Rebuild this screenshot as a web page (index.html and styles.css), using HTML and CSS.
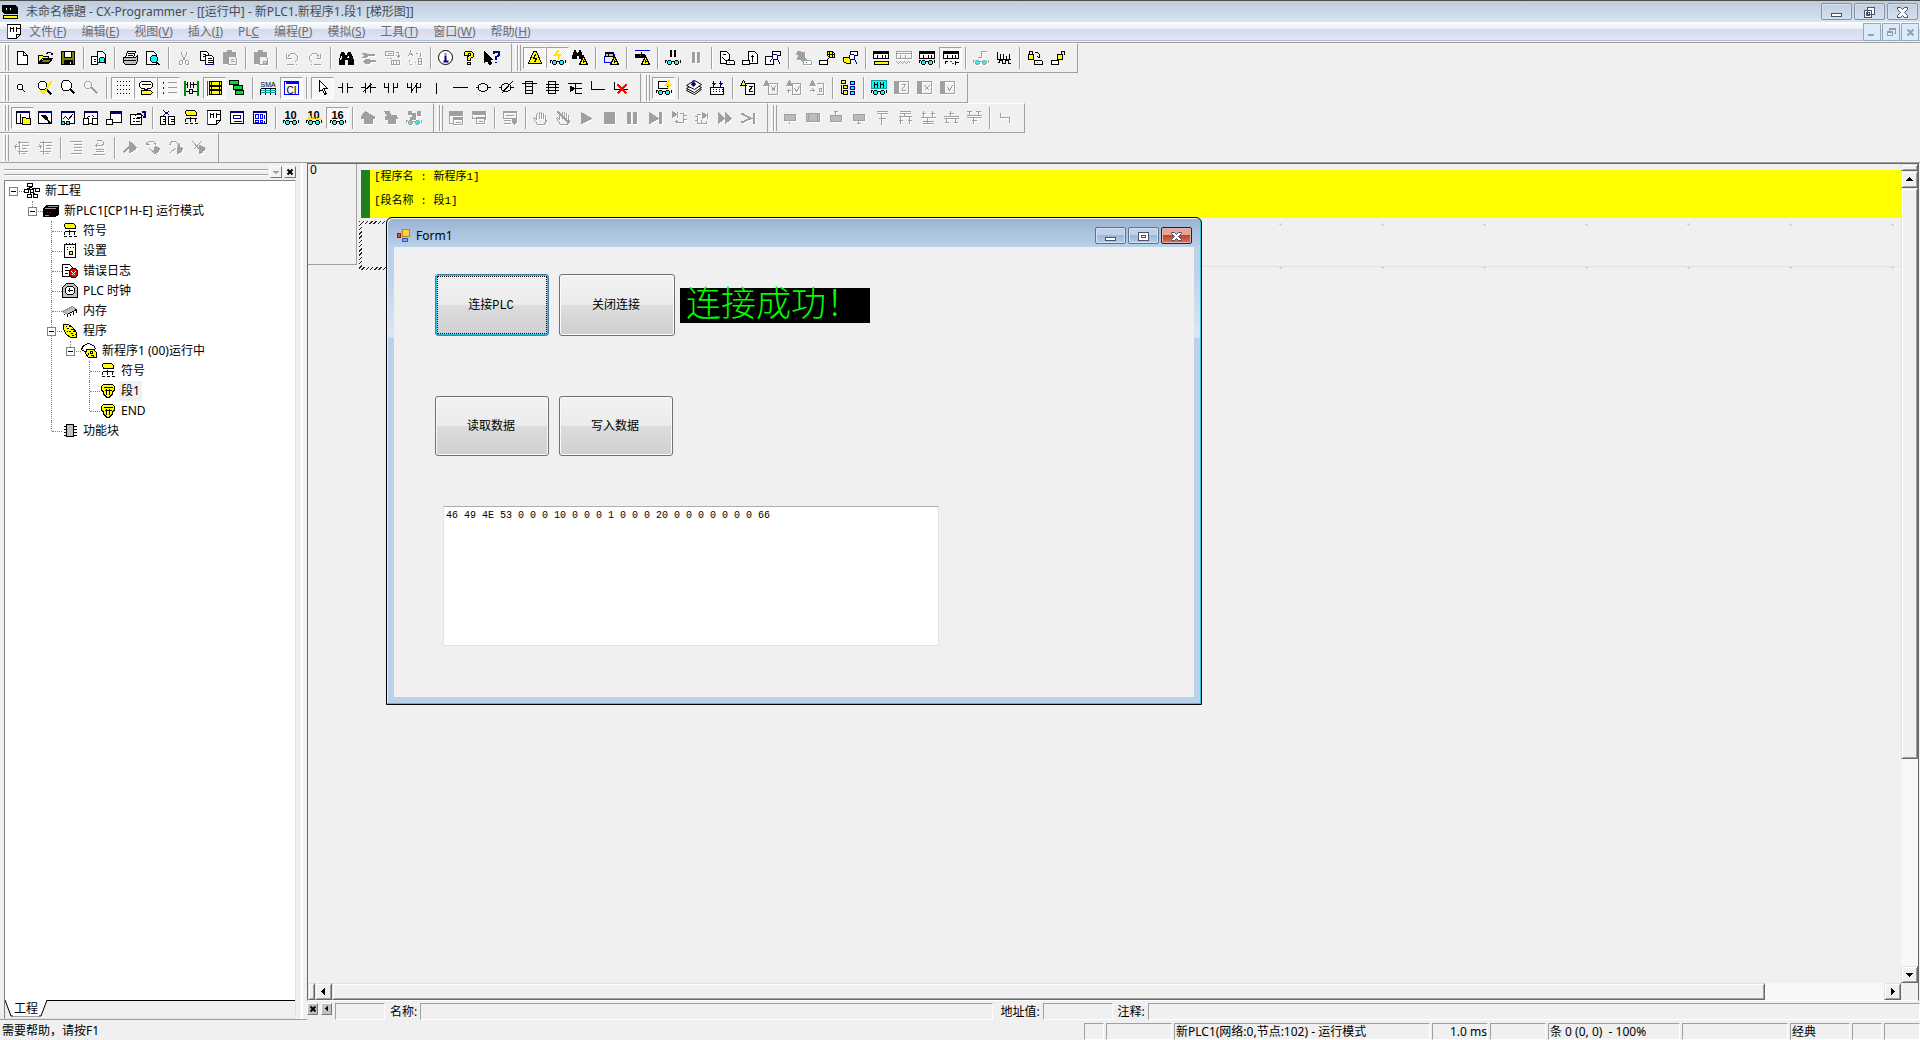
FILE: index.html
```html
<!DOCTYPE html>
<html lang="zh-CN">
<head>
  <meta charset="UTF-8" />
  <meta name="viewport" content="width=device-width, initial-scale=1.0"/>
  <title>CX-Programmer</title>
  <link rel="stylesheet" href="styles.css">
</head>
<body>

  <!-- Shared icon parts -->
  <svg class="defs" aria-hidden="true">
    <defs>
      <g id="glasses"><path d="M0 12v-2h1M15 12v-2h-1M6 11h3"/><path class="c" d="M3 10h2l1 1v2l-1 1h-2l-1-1v-2zM10 10h2l1 1v2l-1 1h-2l-1-1v-2z"/></g>
      <g id="warn"><path class="y" d="M11 6l4 8h-8z"/><path d="M11 9v3M10 11h2"/></g>
      <g id="chip"><path class="w" d="M7 10h7l1 1v3h-8z"/><path class="green" d="M9 12h1"/></g>
      <g id="plc"><path class="w" d="M0 2h15v6h-15z"/><path class="k" d="M0 1h15v2h-15z"/><path d="M4 4v4M9 4v4M12 4v4"/></g>
      <g id="lens"><path class="c" d="M7 5h3l2 2v3l-2 2h-3l-2-2v-3z"/><path d="M11 11l4 4M11 12l3 3"/></g>
      <g id="page"><path class="w" d="M3 1h6l4 4v9h-10z"/><path d="M9 1v4h4"/></g>
      <g id="contact"><path d="M0 7h5M5 2v10M10 2v10M10 7h5"/></g>
      <g id="list"><path d="M6 2h9M6 7h9M6 12h9"/></g>
      <g id="tag"><path class="y" d="M3 0h8l2 2v3h-9l-2-2v-2z"/><path d="M2 5h9M2 8h11M2 8v3M7 6v5M12 8v3M1 13h3M6 13h3M11 13h3"/></g>
      <g id="win"><path class="w" d="M1 1h13v12h-13z"/><path class="n" d="M1 1h13M1 2h13"/></g>
      <g id="section"><path class="y" d="M3 1h9l2 2v4l-2 1v3l-2 1-1 2h-3l-1-2-2-1v-3l-2-1v-4z"/><path d="M3 4h9M6 5v6M9 5v6M4 7h7"/></g>
      <g id="leaf"><path class="y" d="M1 1h5l4 3 4 5v5h-6l-4-3-3-5z"/><path d="M3 3h1M6 3h2M4 5h2M8 6h2M6 8h2M10 8h2M8 10h2M12 11h1M9 12h2M4 8h1"/></g>
      <g id="hand"><path d="M3 9v-5l1-1M6 8v-7M8 8v-7M10 8v-6M12 10v-6M3 9l-2-2-1 1 4 6h7l2-4"/></g>
    </defs>
  </svg>

  <header class="titlebar">
    <svg class="ico" viewBox="-.5 -.5 16 16"><path class="k" d="M0 1h13l2 2v6h-13l-2-2z"/><path class="w" d="M3 3h2v3h-2zM7 3h2v3h-2zM11 3h1v3h-1z"/><path class="y" d="M1 11h14v3h-14z"/></svg>
    <h1>未命名標題 - CX-Programmer - [[运行中] - 新PLC1.新程序1.段1 [梯形图]]</h1>
    <div class="caption-buttons">
      <button title="最小化"><svg class="ico" viewBox="-.5 -.5 16 16"><path class="w" d="M3 9h10v3h-10z"/></svg></button>
      <button title="还原"><svg class="ico" viewBox="-.5 -.5 16 16"><path class="w" d="M6 3h7v7h-7zM3 6h7v7h-7z"/><path d="M5 8h3v3h-3z"/></svg></button>
      <button title="关闭"><svg class="ico smooth" viewBox="-.5 -.5 16 16"><path class="w" d="M3 3h3l2 2 2-2h3v2l-3 3 3 3v2h-3l-2-2-2 2h-3v-2l3-3-3-3z"/></svg></button>
    </div>
  </header>

  <nav class="menubar">
    <svg class="ico" viewBox="-.5 -.5 16 16"><path class="w" d="M1 0h13v10l-4 4h-9z"/><path class="green" d="M1 0v14"/><path d="M4 2v5M4 4h3M7 2v5M10 2v5M10 4h3M10 14v-4h4"/></svg>
    <button>文件(<u>F</u>)</button>
    <button>编辑(<u>E</u>)</button>
    <button>视图(<u>V</u>)</button>
    <button>插入(<u>I</u>)</button>
    <button>PL<u>C</u></button>
    <button>编程(<u>P</u>)</button>
    <button>模拟(<u>S</u>)</button>
    <button>工具(<u>T</u>)</button>
    <button>窗口(<u>W</u>)</button>
    <button>帮助(<u>H</u>)</button>
    <div class="mdi-buttons">
      <button title="最小化"><svg class="ico" viewBox="-.5 -.5 16 16"><path class="k" d="M4 10h5v1h-5z"/></svg></button>
      <button title="还原"><svg class="ico" viewBox="-.5 -.5 16 16"><path d="M6 6v-2h6v5h-2M6 5h6M4 7h5v4h-5zM4 8h5"/></svg></button>
      <button title="关闭"><svg class="ico smooth" viewBox="-.5 -.5 16 16"><path class="bold" d="M5 5l6 6M11 5l-6 6"/></svg></button>
    </div>
  </nav>

  <div class="toolbar-row">
    <div class="toolbar">
      <button class="tb" title="新建"><svg class="ico" viewBox="-.5 -.5 16 16"><use href="#page"/></svg></button>
      <button class="tb" title="打开"><svg class="ico" viewBox="-.5 -.5 16 16"><path class="y" d="M1 13v-8h4l1 1h5v3M1 13h10l4-5h-10z"/><path class="olive" d="M2 12h9l3-3h-8z"/><path d="M9 3l2-1h2l2 2M15 2v2h-2"/></svg></button>
      <button class="tb" title="保存"><svg class="ico" viewBox="-.5 -.5 16 16"><path class="olive" d="M1 1h13v13h-13z"/><path class="w" d="M4 1h7v6h-7z"/><path class="k" d="M4 10h8v4h-8z"/><path class="white" d="M10 11v2"/></svg></button>
      <i class="sep"></i>
      <button class="tb" title="比较"><svg class="ico" viewBox="-.5 -.5 16 16"><path class="w" d="M6 1h5l3 3v8h-8zM0 6h6v8h-6z"/><path d="M2 9h2M2 11h2"/><path class="c" d="M9 7h3l1 1v3l-1 1h-3l-1-1v-3z"/><path d="M13 12l2 2"/></svg></button>
      <i class="sep"></i>
      <button class="tb" title="打印"><svg class="ico" viewBox="-.5 -.5 16 16"><path class="w" d="M5 1h8l-2 6h-8z"/><path class="grey" d="M1 7h12l2-2v6l-2 3h-10l-2-2z"/><path d="M5 3h6M5 5h5M1 10h12"/></svg></button>
      <button class="tb" title="打印预览"><svg class="ico" viewBox="-.5 -.5 16 16"><path class="w" d="M1 1h7l3 3v10h-10z"/><use href="#lens"/></svg></button>
      <i class="sep"></i>
      <button class="tb" title="剪切" disabled><svg class="ico" viewBox="-.5 -.5 16 16"><path d="M5 1v3l4 6M10 1v3l-4 6M4 10h2v3l-1 1h-2v-3zM9 10h2l1 1v3h-2l-1-1z"/></svg></button>
      <button class="tb" title="复制"><svg class="ico" viewBox="-.5 -.5 16 16"><path class="w" d="M1 1h6l2 2v7h-8z"/><path class="w n" d="M6 5h6l2 2v7h-8z"/><path d="M3 4h3M3 6h3M8 8h4M8 10h5M8 12h5"/></svg></button>
      <button class="tb" title="粘贴" disabled><svg class="ico" viewBox="-.5 -.5 16 16"><path class="k" d="M1 2h12v11h-12zM5 0h4v2h-4z"/><path class="paper" d="M6 6h6l2 2v6h-8z"/><path d="M8 9h3M8 11h4"/></svg></button>
      <i class="sep"></i>
      <button class="tb" title="选择性粘贴" disabled><svg class="ico" viewBox="-.5 -.5 16 16"><path class="k" d="M1 2h12v11h-12zM5 0h4v2h-4z"/><path class="paper" d="M6 6h6l2 2v6h-8z"/><path d="M10 11h3v2h-3z"/></svg></button>
      <i class="sep"></i>
      <button class="tb" title="撤消" disabled><svg class="ico" viewBox="-.5 -.5 16 16"><path d="M2 3v5h5M3 7l3-4h4l3 3v3l-3 3M2 14h7M11 14h1"/></svg></button>
      <button class="tb" title="恢复" disabled><svg class="ico" viewBox="-.5 -.5 16 16"><path d="M13 3v5h-5M12 7l-3-4h-4l-3 3v3l3 3M13 14h-7M4 14h-1"/></svg></button>
      <i class="sep"></i>
      <button class="tb" title="查找"><svg class="ico" viewBox="-.5 -.5 16 16"><path class="k" d="M3 2h2l2 4h1l2-4h2l3 8v4h-5v-5h-4v5h-5v-4z"/><path class="white" d="M3 6l-1 4M10 6l-1 2"/></svg></button>
      <button class="tb" title="替换" disabled><svg class="ico" viewBox="-.5 -.5 16 16"><path class="k" d="M1 3h4l1 1h7v1h-7l-1 2h-4l2-2zM2 11l2-2h4l1 1h5v1h-5l-1 2h-4z"/></svg></button>
      <button class="tb" title="全部替换" disabled><svg class="ico" viewBox="-.5 -.5 16 16"><path d="M1 1h8v4h-8zM3 3h4M2 8h1M5 8h2M11 2h3v4M12 5l2 2 1-2M7 10h8v4h-8zM9 10v4M12 10v4"/></svg></button>
      <button class="tb" title="更改地址" disabled><svg class="ico" viewBox="-.5 -.5 16 16"><path d="M1 6l2-5 2 5M2 4h3M8 3h2M13 2v4M2 9v2M2 14h2M7 12h1M11 8v6h3v-6zM11 11h3"/></svg></button>
      <i class="sep"></i>
      <button class="tb" title="信息"><svg class="ico smooth" viewBox="-.5 -.5 16 16"><circle class="w" cx="7" cy="7" r="7"/><path class="n bold" d="M7 3v1M6 6h1v5M5 11h5"/></svg></button>
      <button class="tb" title="帮助"><svg class="ico" viewBox="-.5 -.5 16 16"><path class="y" d="M4 1h6l2 2v3l-3 2v2h-3v-4l3-1v-2h-2v2h-4v-3zM6 12h3v2h-3z"/></svg></button>
      <button class="tb" title="上下文帮助"><svg class="ico" viewBox="-.5 -.5 16 16"><path class="k" d="M0 1l8 8h-3l2 4-2 1-2-4-3 2z"/><path class="n bold" d="M9 3v-2h5v4l-3 2v2M11 11v1"/></svg></button>
    </div>
    <div class="toolbar">
      <button class="tb on" title="在线工作"><svg class="ico" viewBox="-.5 -.5 16 16"><path class="y" d="M6 1h3l5 12h-13z"/><path d="M8 4l-2 4h3l-2 4"/></svg></button>
      <button class="tb on" title="监视"><svg class="ico" viewBox="-.5 -.5 16 16"><path class="gold bold" d="M8 0l-3 4h5l-3 5"/><use href="#glasses"/></svg></button>
      <button class="tb" title="自动在线"><svg class="ico" viewBox="-.5 -.5 16 16"><path class="k" d="M2 0h1l1 3h2l1-3h1l2 6v2h-3v-3h-3v3h-4v-2z"/><use href="#warn"/></svg></button>
      <i class="sep"></i>
      <button class="tb" title="模拟在线"><svg class="ico" viewBox="-.5 -.5 16 16"><path class="grey" d="M2 2h8v4h-8z"/><path d="M2 3h8M5 2v4"/><path class="blue" d="M1 5v7h6M11 3v2"/><use href="#warn"/></svg></button>
      <i class="sep"></i>
      <button class="tb" title="网络在线"><svg class="ico" viewBox="-.5 -.5 16 16"><path class="blue" d="M0 0h15M7 1v2"/><path class="k" d="M1 4h9v3h-9z"/><path class="red" d="M5 5h1"/><use href="#warn"/></svg></button>
      <i class="sep"></i>
      <button class="tb" title="暂停监视"><svg class="ico" viewBox="-.5 -.5 16 16"><path class="k" d="M5 0h1v6h-1zM9 0h1v6h-1z"/><use href="#glasses"/></svg></button>
      <button class="tb" title="暂停" disabled><svg class="ico" viewBox="-.5 -.5 16 16"><path class="k" d="M4 2h2v10h-2zM9 2h2v10h-2z"/></svg></button>
      <i class="sep"></i>
      <button class="tb" title="下载"><svg class="ico" viewBox="-.5 -.5 16 16"><path class="w" d="M1 1h6l3 3v9h-9z"/><path d="M3 4h3M3 7l3 3h3M9 8v3"/><use href="#chip"/></svg></button>
      <button class="tb" title="上载"><svg class="ico" viewBox="-.5 -.5 16 16"><path class="w" d="M6 1h6l3 3v9h-9z"/><path d="M10 5v6M8 7l2-2 2 2"/><path class="w" d="M0 10h7v4h-7z"/></svg></button>
      <button class="tb" title="与PLC比较"><svg class="ico" viewBox="-.5 -.5 16 16"><path class="w" d="M0 6h8v8h-8zM7 1h8v4h-8z"/><path class="w n" d="M8 4h3l1 1v3l-1 1h-3l-1-1v-3z"/><path class="n" d="M12 9l3 5M6 9l-2 3"/></svg></button>
      <i class="sep"></i>
      <button class="tb" title="传送" disabled><svg class="ico" viewBox="-.5 -.5 16 16"><path class="k" d="M1 1h3l1 1h3v6l2 1v2h-4l-1-2h-4v-2h1v-3h-2z"/><use href="#chip"/></svg></button>
      <button class="tb" title="任务传送"><svg class="ico" viewBox="-.5 -.5 16 16"><path class="y" d="M8 1h5l2 2v4h-5l-2-2z"/><path d="M10 1v6M13 1v6M8 4h7M9 8l-2 2"/><path class="w" d="M0 10h8v4h-8z"/></svg></button>
      <button class="tb" title="任务比较"><svg class="ico" viewBox="-.5 -.5 16 16"><path class="y" d="M1 7h5l2 2v4h-4l-3-2z"/><path class="w" d="M8 1h7v4h-7z"/><path class="w n" d="M8 4h3l1 1v3l-1 1h-3l-1-1v-3z"/><path class="n" d="M12 9l3 5"/></svg></button>
      <i class="sep"></i>
      <button class="tb" title="编程模式"><svg class="ico" viewBox="-.5 -.5 16 16"><use href="#plc"/><path class="y" d="M1 11h14v3h-14z"/></svg></button>
      <button class="tb" title="调试模式" disabled><svg class="ico" viewBox="-.5 -.5 16 16"><path d="M0 1h15v7h-15zM0 3h15M4 4v4M9 4v4M0 11l2 2 2-2 2 2 2-2 2 2 2-2 2 2"/></svg></button>
      <button class="tb" title="监视模式"><svg class="ico" viewBox="-.5 -.5 16 16"><use href="#plc"/><use href="#glasses"/></svg></button>
      <button class="tb on" title="运行模式"><svg class="ico" viewBox="-.5 -.5 16 16"><use href="#plc"/><path d="M1 11h3M2 10v3M11 12h4M12 10v4"/><path class="green" d="M6 11h2M8 13h2"/></svg></button>
      <i class="sep"></i>
      <button class="tb" title="微分监视" disabled><svg class="ico" viewBox="-.5 -.5 16 16"><path d="M4 7h4v-6h5"/><use href="#glasses"/></svg></button>
      <button class="tb" title="时序图"><svg class="ico" viewBox="-.5 -.5 16 16"><path d="M1 1v8h13M4 3v6M7 3v6M10 5v4M13 3v6M1 12h2v-2h3v3h3v-3h3v3h2"/></svg></button>
      <i class="sep"></i>
      <button class="tb" title="设置密码"><svg class="ico" viewBox="-.5 -.5 16 16"><path class="y" d="M1 4h5v5h-5z"/><path d="M2 4v-3h3v3M7 2h3l2 2v3M10 6l2 2"/><use href="#chip"/></svg></button>
      <button class="tb" title="释放密码"><svg class="ico" viewBox="-.5 -.5 16 16"><path class="y" d="M7 4h5v5h-5z"/><path d="M11 4v-3h3v3"/><path class="w" d="M1 10h7v4h-7z"/></svg></button>
    </div>
  </div>

  <div class="toolbar-row">
    <div class="toolbar">
      <button class="tb" title="缩小"><svg class="ico" viewBox="-.5 -.5 16 16"><path class="w" d="M4 4h3l1 1v3l-1 1h-3l-1-1v-3zM8 9l3 3"/></svg></button>
      <button class="tb" title="适合"><svg class="ico" viewBox="-.5 -.5 16 16"><path class="w" d="M3 1h4l2 2v4l-2 2h-4l-2-2v-4z"/><path class="bold" d="M9 9l5 5"/><path class="gold bold" d="M3 10l3 3 8-12"/></svg></button>
      <button class="tb" title="放大"><svg class="ico" viewBox="-.5 -.5 16 16"><path class="w" d="M3 0h5l3 3v4l-3 3h-5l-2-3v-4z"/><path class="bold" d="M10 9l4 4"/></svg></button>
      <button class="tb" title="缩放" disabled><svg class="ico" viewBox="-.5 -.5 16 16"><path d="M3 1h3l2 2v3l-2 2h-3l-2-2v-3z"/><path class="bold" d="M8 7l6 6"/></svg></button>
      <i class="sep"></i>
      <button class="tb on" title="网格"><svg class="ico" viewBox="-.5 -.5 16 16"><path class="dots" d="M1 1h14M1 5h14M1 9h14M1 13h14"/></svg></button>
      <button class="tb on" title="注释"><svg class="ico" viewBox="-.5 -.5 16 16"><path class="w" d="M3 1h9l2 2v3l-2 2h-2l-4 2v-2h-3l-2-2v-3z"/><path d="M3 4h9"/><path class="y" d="M3 10h9l2 2-2 2h-9z"/></svg></button>
      <button class="tb on" title="条注释列表"><svg class="ico" viewBox="-.5 -.5 16 16"><path class="blue bold" d="M1 2h1M1 7h1M1 12h1"/><g class="dim"><use href="#list"/></g></svg></button>
      <button class="tb" title="监视数据"><svg class="ico" viewBox="-.5 -.5 16 16"><path class="green bold" d="M1 0v15M14 0v15"/><path d="M2 4h2M4 1v6M7 1v6M7 4h3M10 1v6M10 4h3M2 11h4M6 9h3v4h-3zM9 11h4"/></svg></button>
      <button class="tb on" title="显示程序"><svg class="ico" viewBox="-.5 -.5 16 16"><path class="green" d="M0 0v15"/><path class="y" d="M2 1h12v4h-12zM2 6h12v3h-12zM2 10h12v4h-12z"/><path d="M4 1v13M12 1v13"/></svg></button>
      <button class="tb" title="梯形图树"><svg class="ico" viewBox="-.5 -.5 16 16"><path class="lime" d="M0 0h9v4h-9zM4 5h9v4h-9zM6 10h8v4h-8z"/></svg></button>
      <i class="sep"></i>
      <button class="tb" title="助记符"><svg class="ico" viewBox="-.5 -.5 16 16"><text x="0" y="6" font-size="7">SMA</text><path d="M0 8h15M0 8v6M5 8v6M10 8v6M15 8v6"/><path class="teal" d="M0 10h15M0 12h15"/></svg></button>
      <button class="tb on" title="CI"><svg class="ico" viewBox="-.5 -.5 16 16"><path class="blue" d="M0 1h14v13h-14z"/><path class="blue bold" d="M1 2h12"/><text x="2" y="13" font-size="10">CI</text></svg></button>
      <i class="sep"></i>
      <button class="tb on" title="选择"><svg class="ico" viewBox="-.5 -.5 16 16"><path class="w" d="M4 0l8 8h-4l3 5-2 1-2-5-3 2z"/></svg></button>
      <button class="tb" title="常开触点"><svg class="ico" viewBox="-.5 -.5 16 16"><use href="#contact"/></svg></button>
      <button class="tb" title="常闭触点"><svg class="ico" viewBox="-.5 -.5 16 16"><use href="#contact"/><path d="M3 11l9-8"/></svg></button>
      <button class="tb" title="或常开"><svg class="ico" viewBox="-.5 -.5 16 16"><path d="M1 2v5h4M5 2v10M10 2v10M10 7h4v-5"/></svg></button>
      <button class="tb" title="或常闭"><svg class="ico" viewBox="-.5 -.5 16 16"><path d="M1 2v5h4M5 2v10M10 2v10M10 7h4v-5M4 12l7-9"/></svg></button>
      <button class="tb" title="竖线"><svg class="ico" viewBox="-.5 -.5 16 16"><path d="M7 2v11"/></svg></button>
      <button class="tb" title="横线"><svg class="ico" viewBox="-.5 -.5 16 16"><path d="M0 7h15"/></svg></button>
      <button class="tb" title="线圈"><svg class="ico" viewBox="-.5 -.5 16 16"><path d="M0 7h3M12 7h3M6 3h3l3 2v4l-3 2h-3l-3-2v-4z"/></svg></button>
      <button class="tb" title="非线圈"><svg class="ico" viewBox="-.5 -.5 16 16"><path d="M0 7h3M12 7h3M6 3h3l3 2v4l-3 2h-3l-3-2v-4zM3 13l11-12"/></svg></button>
      <button class="tb" title="指令"><svg class="ico" viewBox="-.5 -.5 16 16"><path d="M4 1h7v12h-7zM0 3h15M4 6h7M4 10h7"/></svg></button>
      <button class="tb" title="功能块"><svg class="ico" viewBox="-.5 -.5 16 16"><path d="M4 1h7v12h-7zM1 4h13M1 7h13M1 10h13"/></svg></button>
      <button class="tb" title="参数"><svg class="ico" viewBox="-.5 -.5 16 16"><path d="M0 3h14M8 3v10M8 8h6M8 13h6"/><path class="k" d="M3 6v5l4-3z"/></svg></button>
      <button class="tb" title="连线"><svg class="ico" viewBox="-.5 -.5 16 16"><path d="M1 0v9h13"/></svg></button>
      <button class="tb" title="删除连线"><svg class="ico" viewBox="-.5 -.5 16 16"><path d="M1 1v8h13"/><path class="red bold" d="M4 4l9 9M13 4l-9 9"/></svg></button>
    </div>
    <div class="toolbar">
      <button class="tb on" title="在线编辑"><svg class="ico" viewBox="-.5 -.5 16 16"><path class="w" d="M2 1h9v7h-9z"/><path class="gold bold" d="M13 0l-3 4h4l-3 4"/><use href="#glasses"/></svg></button>
      <i class="sep"></i>
      <button class="tb" title="编译"><svg class="ico smooth" viewBox="-.5 -.5 16 16"><path class="w" d="M0 10l8 4 7-5-7-4z"/><path class="w" d="M0 8l8 4 7-5-7-4z"/><path class="w" d="M0 5l8 4 7-5-7-4z"/><path class="n bold" d="M7 0v5M5 3l2 2 2-2"/></svg></button>
      <button class="tb" title="编译全部"><svg class="ico" viewBox="-.5 -.5 16 16"><path class="w" d="M1 7h13v7h-13z"/><path class="dots" d="M3 9h10M3 11h10"/><path class="n" d="M4 0v6M2 3h4M3 4h2M11 0v6M9 3h4M10 4h2"/></svg></button>
      <i class="sep"></i>
      <button class="tb" title="开始在线编辑"><svg class="ico" viewBox="-.5 -.5 16 16"><path class="w" d="M5 3h9v11h-9z"/><path d="M8 11l4-5M8 6h4M8 11h4"/><path class="y" d="M3 0l3 5h-6z"/></svg></button>
      <button class="tb" title="取消在线编辑" disabled><svg class="ico" viewBox="-.5 -.5 16 16"><path d="M5 3h9v11h-9zM8 6l4 5M12 6l-4 5"/><path class="k" d="M3 0l3 5h-6z"/></svg></button>
      <button class="tb" title="发送更改" disabled><svg class="ico" viewBox="-.5 -.5 16 16"><path d="M6 3h8v11h-8zM8 8l2 3 3-5M0 10h4M2 8v4"/><path class="k" d="M3 0l3 5h-6z"/></svg></button>
      <button class="tb" title="转到编辑" disabled><svg class="ico" viewBox="-.5 -.5 16 16"><path d="M7 3h7v11h-7M0 10h5M3 8l2 2-2 2M10 8h2v3h-2z"/><path class="k" d="M3 0l3 5h-6z"/></svg></button>
      <i class="sep"></i>
      <button class="tb" title="交叉引用"><svg class="ico" viewBox="-.5 -.5 16 16"><path class="y" d="M1 0h4v3h-4zM3 5h4v3h-4zM3 10h4v4h-4z"/><path class="c n" d="M10 1h4v3h-4zM10 6h4v3h-4zM10 11h4v3h-4z"/><path d="M1 4v9h2"/></svg></button>
      <i class="sep"></i>
      <button class="tb" title="功能块监视"><svg class="ico" viewBox="-.5 -.5 16 16"><path class="teal cf" d="M0 0h15v8h-15z"/><path d="M3 1v6M3 4h3M6 1v6M9 1v6M9 4h3M12 1v6"/><use href="#glasses"/></svg></button>
      <button class="tb" title="编辑块" disabled><svg class="ico" viewBox="-.5 -.5 16 16"><path class="k" d="M0 1h4v12h-4z"/><path d="M4 1h10v12h-10zM7 10l4-6M7 4h4M7 10h4"/></svg></button>
      <button class="tb" title="取消块" disabled><svg class="ico" viewBox="-.5 -.5 16 16"><path class="k" d="M0 1h4v12h-4z"/><path d="M4 1h10v12h-10zM7 5l5 5M12 5l-5 5"/></svg></button>
      <button class="tb" title="确认块" disabled><svg class="ico" viewBox="-.5 -.5 16 16"><path class="k" d="M0 1h4v12h-4z"/><path d="M4 1h10v12h-10zM7 7l2 3 3-5"/></svg></button>
    </div>
  </div>

  <div class="toolbar-row">
    <div class="toolbar">
      <button class="tb on" title="工作区"><svg class="ico" viewBox="-.5 -.5 16 16"><use href="#win"/><path d="M5 3v10"/><path class="y" d="M7 7h3l1 1h4v6h-8z"/></svg></button>
      <button class="tb" title="输出窗口"><svg class="ico" viewBox="-.5 -.5 16 16"><use href="#win"/><path class="k" d="M4 5h4l2 2-2 2-2-2z"/><path class="bold" d="M8 7l5 6"/></svg></button>
      <button class="tb" title="监视窗口"><svg class="ico" viewBox="-.5 -.5 16 16"><use href="#win"/><path d="M2 9l3-3 3 3 4-5"/><path class="c" d="M1 11h3v3h-3zM6 11h3v3h-3z"/></svg></button>
      <button class="tb" title="地址引用"><svg class="ico" viewBox="-.5 -.5 16 16"><use href="#win"/><path class="w" d="M0 8h5v6h-5zM9 8h5v6h-5z"/><path d="M7 5l-3 2M9 5l2 2"/></svg></button>
      <button class="tb" title="输出"><svg class="ico" viewBox="-.5 -.5 16 16"><path class="w" d="M4 1h11v11h-11z"/><path class="n bold" d="M4 2h11"/><path class="w" d="M0 9h6v5h-6z"/></svg></button>
      <button class="tb" title="属性"><svg class="ico" viewBox="-.5 -.5 16 16"><path class="w" d="M1 4h11v10h-11z"/><path d="M3 8h2M6 8h4M3 11h2M6 11h4M5 6l3-3h3l2 2-2 2h-4"/><path class="n bold" d="M12 1h3v5h-2"/></svg></button>
      <i class="sep"></i>
      <button class="tb" title="交叉表"><svg class="ico" viewBox="-.5 -.5 16 16"><path class="n" d="M3 0l6 5M9 0l-6 5"/><path class="w" d="M0 6h5v8h-5zM8 6h6v8h-6z"/><path d="M2 9h2M2 11h2M10 9h3M10 11h3"/></svg></button>
      <button class="tb" title="符号表"><svg class="ico" viewBox="-.5 -.5 16 16"><use href="#tag"/></svg></button>
      <button class="tb" title="梯形图"><svg class="ico" viewBox="-.5 -.5 16 16"><path class="w" d="M1 0h13v10l-4 4h-9z"/><path class="green" d="M1 0v14"/><path d="M4 2v5M4 4h3M7 2v5M10 2v5M10 4h3M10 14v-4h4"/></svg></button>
      <button class="tb" title="助记符视图"><svg class="ico" viewBox="-.5 -.5 16 16"><use href="#win"/><path class="n" d="M4 5h7v3h-7zM4 11h8"/></svg></button>
      <button class="tb" title="I/O表"><svg class="ico" viewBox="-.5 -.5 16 16"><use href="#win"/><path class="blue" d="M3 4h3v4h-3zM8 4h2v4h-2zM12 4v4M3 10h3v2h-3zM8 10h2v2h-2zM12 10v2"/></svg></button>
      <i class="sep"></i>
      <button class="tb" title="十进制"><svg class="ico" viewBox="-.5 -.5 16 16"><text x="1" y="8" font-size="11" font-weight="bold">10</text><use href="#glasses"/></svg></button>
      <button class="tb" title="带符号十进制"><svg class="ico" viewBox="-.5 -.5 16 16"><text x="1" y="8" font-size="11" font-weight="bold">10</text><path class="gold bold" d="M0 8h6M3 5v6M9 8h6"/><use href="#glasses"/></svg></button>
      <button class="tb on" title="十六进制"><svg class="ico" viewBox="-.5 -.5 16 16"><text x="1" y="8" font-size="11" font-weight="bold">16</text><use href="#glasses"/></svg></button>
      <i class="sep"></i>
      <button class="tb" title="强制为开" disabled><svg class="ico" viewBox="-.5 -.5 16 16"><path class="k" d="M5 1l6 4 3 1v2h-2v5h-8v-5h-3v-2z"/></svg></button>
      <button class="tb" title="强制为关" disabled><svg class="ico" viewBox="-.5 -.5 16 16"><path class="k" d="M1 1h5l1 4h6l1 3h-2v5h-7v-4h-3v-3h3z"/></svg></button>
      <button class="tb" title="取消强制" disabled><svg class="ico" viewBox="-.5 -.5 16 16"><path class="k" d="M2 1h3v3h-3zM6 3h3v3h-3zM11 1h3v4h-3zM4 7h5v2h-5z"/><use href="#glasses"/></svg></button>
    </div>
    <div class="toolbar">
      <button class="tb" title="模拟器" disabled><svg class="ico" viewBox="-.5 -.5 16 16"><path class="k" d="M1 1h13v4h-13zM5 7h9v2h-9z"/><path d="M1 2v11h3M5 9h9v5h-9zM7 12h5"/></svg></button>
      <button class="tb" title="模拟器设置" disabled><svg class="ico" viewBox="-.5 -.5 16 16"><path class="k" d="M1 1h13v3h-13zM5 7h8v1h-8z"/><path d="M1 5v3h3M5 8h8v5h-8zM7 11h4M14 4v5"/></svg></button>
      <i class="sep"></i>
      <button class="tb" title="断点列表" disabled><svg class="ico" viewBox="-.5 -.5 16 16"><path d="M1 1h13v7h-13zM1 2h13M3 5h8M1 10h7M1 13h7"/><path class="k" d="M10 8h4v4l-2 2-2-2z"/></svg></button>
      <i class="sep"></i>
      <button class="tb" title="断点" disabled><svg class="ico" viewBox="-.5 -.5 16 16"><use href="#hand"/></svg></button>
      <button class="tb" title="清除断点" disabled><svg class="ico" viewBox="-.5 -.5 16 16"><use href="#hand"/><path class="bold" d="M1 1l12 12"/></svg></button>
      <button class="tb" title="运行" disabled><svg class="ico" viewBox="-.5 -.5 16 16"><path class="k" d="M2 2v11l10-5z"/></svg></button>
      <button class="tb" title="停止" disabled><svg class="ico" viewBox="-.5 -.5 16 16"><path class="k" d="M2 2h10v11h-10z"/></svg></button>
      <button class="tb" title="暂停" disabled><svg class="ico" viewBox="-.5 -.5 16 16"><path class="k" d="M2 2h3v11h-3zM8 2h3v11h-3z"/></svg></button>
      <button class="tb" title="单步运行" disabled><svg class="ico" viewBox="-.5 -.5 16 16"><path class="k" d="M1 2v11l9-5zM11 2h2v11h-2z"/></svg></button>
      <button class="tb" title="步入" disabled><svg class="ico" viewBox="-.5 -.5 16 16"><path class="k" d="M1 1v6l4-3zM6 1v6"/><path d="M8 3h4v9h-7v-3M12 5h3M12 9h3M3 11h3"/></svg></button>
      <button class="tb" title="步出" disabled><svg class="ico" viewBox="-.5 -.5 16 16"><path class="k" d="M8 2v6l4-3zM13 2v6"/><path d="M6 4h-3v9h9v-3M0 6h3M0 10h3M7 9v3"/></svg></button>
      <button class="tb" title="连续步进" disabled><svg class="ico" viewBox="-.5 -.5 16 16"><path class="k" d="M1 2v11l6-5zM8 2v11l6-5z"/></svg></button>
      <button class="tb" title="扫描运行" disabled><svg class="ico" viewBox="-.5 -.5 16 16"><path class="bold" d="M1 3l9 5-9 4M13 2v11"/></svg></button>
    </div>
    <div class="toolbar">
      <button class="tb" title="SFC步" disabled><svg class="ico" viewBox="-.5 -.5 16 16"><path class="shade" d="M2 4h11v6h-11zM7 11v2"/></svg></button>
      <button class="tb" title="SFC初始步" disabled><svg class="ico" viewBox="-.5 -.5 16 16"><path class="shade" d="M1 3h13v8h-13zM3 3v8M12 3v8"/></svg></button>
      <button class="tb" title="SFC入口" disabled><svg class="ico" viewBox="-.5 -.5 16 16"><path class="shade" d="M2 5h11v6h-11zM5 1h4M7 1v4"/></svg></button>
      <button class="tb" title="SFC返回" disabled><svg class="ico" viewBox="-.5 -.5 16 16"><path class="shade" d="M2 4h11v6h-11zM5 13h4M7 10v3"/></svg></button>
      <button class="tb" title="转换" disabled><svg class="ico" viewBox="-.5 -.5 16 16"><path d="M2 1h11M2 3h11M7 3v11M4 8h7"/></svg></button>
      <button class="tb" title="选择分支" disabled><svg class="ico" viewBox="-.5 -.5 16 16"><path d="M2 1h11M2 3h11M7 3v3M1 6h13M3 6v7M12 6v7M1 10h4M10 10h4"/></svg></button>
      <button class="tb" title="选择合并" disabled><svg class="ico" viewBox="-.5 -.5 16 16"><path d="M3 0v7M12 0v7M1 3h4M10 3h4M0 7h15M7 7v5M2 11h11M2 13h11"/></svg></button>
      <button class="tb" title="并行分支" disabled><svg class="ico" viewBox="-.5 -.5 16 16"><path d="M7 0v6M5 3h5M0 6h15M0 8h15M3 8v4M12 8v4M1 12h4M10 12h4"/></svg></button>
      <button class="tb" title="并行合并" disabled><svg class="ico" viewBox="-.5 -.5 16 16"><path d="M0 1h5M9 1h5M3 1v4M12 1v4M0 5h15M0 7h15M7 7v6M5 10h5"/></svg></button>
      <i class="sep"></i>
      <button class="tb" title="跳转" disabled><svg class="ico" viewBox="-.5 -.5 16 16"><path d="M3 2v5h9v5"/></svg></button>
    </div>
  </div>

  <div class="toolbar-row last">
    <div class="toolbar">
      <button class="tb" title="减少缩进" disabled><svg class="ico" viewBox="-.5 -.5 16 16"><path d="M3 2h11M7 5h7M7 8h5M3 11h10M7 13h4M5 0v14M0 6h4M2 4l-2 2 2 3"/></svg></button>
      <button class="tb" title="增加缩进" disabled><svg class="ico" viewBox="-.5 -.5 16 16"><path d="M2 2h12M8 5h6M8 8h5M2 11h11M8 13h3M6 0v14M0 6h4M2 4l2 2-2 3"/></svg></button>
      <i class="sep"></i>
      <button class="tb" title="注释块" disabled><svg class="ico" viewBox="-.5 -.5 16 16"><path d="M1 1h12M5 4h8M5 7h8M5 10h8M2 13h11"/></svg></button>
      <button class="tb" title="取消注释块" disabled><svg class="ico" viewBox="-.5 -.5 16 16"><path d="M5 0h5l2 2v2l-2 1h-6M6 3l-2 2 2 2M4 9h8M4 11h8M1 14h12"/></svg></button>
      <i class="sep"></i>
      <button class="tb" title="书签" disabled><svg class="ico" viewBox="-.5 -.5 16 16"><path class="k" d="M7 1v11l5-2 2-3-3-3z"/><path class="bold" d="M1 12l7-7"/></svg></button>
      <button class="tb" title="上一书签" disabled><svg class="ico" viewBox="-.5 -.5 16 16"><path class="k" d="M9 7v6l4-2 1-3-3-2z"/><path d="M1 4l3-3h4l3 4M1 1v3h3M4 8l8 7"/></svg></button>
      <button class="tb" title="下一书签" disabled><svg class="ico" viewBox="-.5 -.5 16 16"><path class="k" d="M9 7v6l4-2 1-3-3-2z"/><path d="M1 5l2-4h4l4 4M11 2v3h-3M2 12l6-5"/></svg></button>
      <button class="tb" title="清除书签" disabled><svg class="ico" viewBox="-.5 -.5 16 16"><path class="k" d="M8 5v8l4-2 2-3-3-2z"/><path d="M1 1l10 11M10 1l-8 8M2 2l10 11"/></svg></button>
    </div>
  </div>

  <main class="workspace">
    <aside class="project">
      <div class="dock-head">
        <div class="dock-grip"></div>
        <button class="mini" title="停靠" disabled><svg class="ico" viewBox="-.5 -.5 16 16"><path class="k" d="M5 7h5l-2 2z"/></svg></button>
        <button class="mini" title="关闭"><svg class="ico smooth" viewBox="-.5 -.5 16 16"><path class="bold" d="M5 5l5 5M10 5l-5 5"/></svg></button>
      </div>
      <div class="tree-box">
        <ul class="tree">
          <li>
            <div class="node"><button class="twist" title="折叠"></button><svg class="ico" viewBox="-.5 -.5 16 16"><path class="w" d="M3 0h5v3h-5zM0 6h4v3h-4zM6 6h3v3h-3zM11 5h4v3h-4zM3 11h4v3h-4zM9 11h4v3h-4z"/><path d="M5 3v3M2 6l4-2 6 2M7 9l-2 2M8 9l3 2"/></svg><span>新工程</span></div>
            <ul>
              <li>
                <div class="node"><button class="twist" title="折叠"></button><svg class="ico" viewBox="-.5 -.5 16 16"><path class="k" d="M3 2h12v9l-3 2h-12v-8z"/><path class="lite" d="M4 3h10M1 5h11"/><path class="red" d="M3 9h1M6 9h1"/><path class="lime-line" d="M1 12h4"/></svg><span>新PLC1[CP1H-E] 运行模式</span></div>
                <ul>
                  <li><div class="node leaf"><svg class="ico" viewBox="-.5 -.5 16 16"><use href="#tag"/></svg><span>符号</span></div></li>
                  <li><div class="node leaf"><svg class="ico" viewBox="-.5 -.5 16 16"><path class="w" d="M2 1h11v13h-11z"/><path class="dots" d="M3 0h10M4 4h7M4 6h3"/><path class="y" d="M7 8h3v3h-3z"/></svg><span>设置</span></div></li>
                  <li><div class="node leaf"><svg class="ico" viewBox="-.5 -.5 16 16"><path class="w" d="M0 1h7l3 3v9h-10z"/><path d="M2 4h3M2 7h4M2 10h3"/><path class="redfill" d="M9 5h4l2 2v5l-2 2h-4l-2-2v-5z"/><path class="white" d="M9 8l4 4M13 8l-4 4"/></svg><span>错误日志</span></div></li>
                  <li><div class="node leaf"><svg class="ico" viewBox="-.5 -.5 16 16"><path class="grey" d="M4 0h7l4 4v10h-15v-10z"/><path class="w" d="M5 3h5l2 2v4l-2 2h-5l-2-2v-4z"/><path d="M7 4v4M5 7h5"/></svg><span>PLC 时钟</span></div></li>
                  <li><div class="node leaf"><svg class="ico" viewBox="-.5 -.5 16 16"><path class="grey lite" d="M0 8l10-5 4 3-9 5z"/><path d="M5 11l9-5v3M5 11v2M8 10v2M11 8v3M2 10v1"/></svg><span>内存</span></div></li>
                  <li>
                    <div class="node"><button class="twist" title="折叠"></button><svg class="ico" viewBox="-.5 -.5 16 16"><use href="#leaf"/></svg><span>程序</span></div>
                    <ul>
                      <li>
                        <div class="node"><button class="twist" title="折叠"></button><svg class="ico" viewBox="-.5 -.5 16 16"><path class="w" d="M3 8l-3-2 2-4 5-2 5 2 2 3-2 3z"/><path class="y" d="M5 6h7l3 3v5h-8l-3-4z"/><path class="w" d="M9 8h2v2h-2z"/><path d="M7 9v2M12 11v2M9 12h2"/></svg><span>新程序1 (00)运行中</span></div>
                        <ul>
                          <li><div class="node leaf"><svg class="ico" viewBox="-.5 -.5 16 16"><use href="#tag"/></svg><span>符号</span></div></li>
                          <li><div class="node leaf"><svg class="ico" viewBox="-.5 -.5 16 16"><use href="#section"/></svg><span class="selected">段1</span></div></li>
                          <li><div class="node leaf"><svg class="ico" viewBox="-.5 -.5 16 16"><use href="#section"/></svg><span>END</span></div></li>
                        </ul>
                      </li>
                    </ul>
                  </li>
                  <li><div class="node leaf"><svg class="ico" viewBox="-.5 -.5 16 16"><path class="grey" d="M4 1h7v12h-7z"/><path d="M1 3h3M1 6h3M1 9h3M1 12h3M11 3h3M11 6h3M11 9h3M11 12h3"/></svg><span>功能块</span></div></li>
                </ul>
              </li>
            </ul>
          </li>
        </ul>
        <div class="tabs">
          <svg class="tab-edge" viewBox="0 0 8 18"><path class="tab-fill" d="M0 0h8v17z"/><path d="M0 0l6 16h2"/></svg>
          <button class="tab">工程</button>
          <svg class="tab-edge" viewBox="0 0 8 18"><path class="tab-fill" d="M0 0h8l-6 16h-2z"/><path d="M8 0l-6 16h-2"/></svg>
          <div class="tab-rest"></div>
        </div>
      </div>
    </aside>

    <section class="editor">
      <div class="pane">
        <div class="ladder">
          <div class="rung-no">0</div>
          <div class="rung">
            <div class="banner">
              <p>[程序名 : 新程序1]</p>
              <p>[段名称 : 段1]</p>
            </div>
            <div class="cells"><div class="cursor"></div></div>
          </div>
        </div>
        <div class="vscroll">
          <div class="split raised"></div>
          <button class="arrow raised" title="上"><svg class="ico" viewBox="-.5 -.5 16 16"><path class="k" d="M4 8h6l-3-3z"/></svg></button>
          <div class="thumb raised"></div>
          <div class="track"></div>
          <button class="arrow raised" title="下"><svg class="ico" viewBox="-.5 -.5 16 16"><path class="k" d="M4 6h6l-3 3z"/></svg></button>
        </div>
        <div class="hscroll">
          <div class="split raised"></div>
          <button class="arrow raised" title="左"><svg class="ico" viewBox="-.5 -.5 16 16"><path class="k" d="M8 4v6l-3-3z"/></svg></button>
          <div class="thumb raised"></div>
          <div class="track"></div>
          <button class="arrow raised" title="右"><svg class="ico" viewBox="-.5 -.5 16 16"><path class="k" d="M6 4v6l3-3z"/></svg></button>
        </div>
      </div>
      <div class="infobar">
        <button class="mini dark" title="关闭"><svg class="ico smooth" viewBox="-.5 -.5 16 16"><path class="bold" d="M5 5l5 5M10 5l-5 5"/></svg></button>
        <button class="mini dark" title="收起"><svg class="ico" viewBox="-.5 -.5 16 16"><path class="k" d="M8 5v4l-2-2z"/></svg></button>
        <input class="w-50" aria-label="类型" readonly>
        <label for="name">名称:</label><input id="name" class="name" readonly>
        <label for="addr">地址值:</label><input id="addr" class="w-70" readonly>
        <label for="note">注释:</label><input id="note" class="note" readonly>
      </div>
    </section>
  </main>

  <footer class="status">
    <span class="hint">需要帮助，请按F1</span>
    <span class="cell s20"></span>
    <span class="cell s66"></span>
    <span class="cell s256">新PLC1(网络:0,节点:102) - 运行模式</span>
    <span class="cell s56 right">1.0 ms</span>
    <span class="cell s56"></span>
    <span class="cell s132">条 0 (0, 0) &nbsp;- 100%</span>
    <span class="cell s106"></span>
    <span class="cell s60">经典</span>
    <span class="cell s30"></span>
    <span class="cell s36"></span>
  </footer>

  <!-- Floating form window -->
  <div class="form-window">
    <div class="form-title">
      <svg class="ico" viewBox="-.5 -.5 16 16"><path class="form-y" d="M6 1h7v7h-7z"/><path class="form-r" d="M1 5h3v4h-3z"/><path class="form-b" d="M6 10h5v3h-5z"/></svg>
      <h2>Form1</h2>
      <div class="caption-buttons">
        <button title="最小化"><svg class="ico" viewBox="-.5 -.5 16 16"><path class="w" d="M3 9h10v3h-10z"/></svg></button>
        <button title="最大化"><svg class="ico" viewBox="-.5 -.5 16 16"><path class="w" d="M3 4h10v8h-10zM6 7h4v2h-4z"/></svg></button>
        <button class="close" title="关闭"><svg class="ico smooth" viewBox="-.5 -.5 16 16"><path class="w" d="M3 4h3l2 2 2-2h3v1l-3 3 3 3v1h-3l-2-2-2 2h-3v-1l3-3-3-3z"/></svg></button>
      </div>
    </div>
    <div class="form-body">
      <div class="form-row">
        <button class="btn default">连接PLC</button>
        <button class="btn wide">关闭连接</button>
        <output class="result">连接成功！</output>
      </div>
      <div class="form-row second">
        <button class="btn">读取数据</button>
        <button class="btn">写入数据</button>
      </div>
      <textarea class="log" aria-label="数据" readonly>46 49 4E 53 0 0 0 10 0 0 0 1 0 0 0 20 0 0 0 0 0 0 0 66</textarea>
    </div>
  </div>

</body>
</html>
```
FILE: styles.css
```css
* {
  box-sizing: border-box;
}

body {
  margin: 0;
  min-height: 100vh;
  display: flex;
  flex-direction: column;
  background: #f0f0f0;
  color: #000;
  font-family: "Noto Sans", "Noto Sans CJK SC", sans-serif;
  font-size: 12px;
  line-height: 18px;
}

h1, h2, p, ul {
  margin: 0;
  padding: 0;
  font-size: 12px;
  font-weight: normal;
}

button {
  padding: 0;
  border: none;
  background: none;
  color: inherit;
  font: inherit;
}

.defs {
  position: absolute;
  width: 0;
  height: 0;
}

/* icons */
.ico {
  display: block;
  flex: none;
  width: 16px;
  height: 16px;
  overflow: visible;
  fill: none;
  stroke: currentColor;
  shape-rendering: crispEdges;
}

.ico.smooth { shape-rendering: auto; }
.ico text { fill: currentColor; stroke: none; font-family: "Liberation Sans", sans-serif; }
.k { fill: currentColor; }
.w { fill: #fff; }
.y { fill: #ff0; }
.c, .cf { fill: #0ff; }
.grey { fill: #c0c0c0; }
.olive { fill: #808000; }
.lime { fill: #0d3; }
.redfill { fill: #e00; }
.shade { fill: #bbb; }
.paper { fill: #f0f0f0; }
.dim { color: #999; }
.n { stroke: #000080; }
.blue { stroke: #00f; }
.green { stroke: #080; }
.lime-line { stroke: #0f0; }
.red { stroke: #f00; }
.gold { stroke: #ffe600; }
.teal { stroke: #0aa; }
.white { stroke: #fff; }
.lite { stroke: #999; }
.bold { stroke-width: 2; }
.dots { stroke-dasharray: 1 2; }
.form-y { fill: #ffd040; stroke: #b8860b; }
.form-r { fill: #e05040; stroke: #a01010; }
.form-b { fill: #70a0f0; stroke: #3060c0; }

/* title bar */
.titlebar {
  display: flex;
  align-items: center;
  height: 22px;
  padding: 0 2px;
  border-top: 1px solid #4d4d4d;
  background: linear-gradient(#bfcbdc, #d7e4f1);
  color: #444c55;
}

.titlebar > .ico { color: #000; }
.titlebar h1 { flex: 1; padding-left: 8px; }

.caption-buttons {
  display: flex;
  gap: 2px;
}

.caption-buttons button {
  display: flex;
  align-items: center;
  width: 31px;
  height: 17px;
  padding-left: 6px;
  border: 1px solid #8393ae;
  border-radius: 2px;
  box-shadow: inset 0 0 0 1px #d5e0ee;
  color: #4a5068;
}

/* menu */
.menubar {
  display: flex;
  align-items: center;
  gap: 1px;
  height: 21px;
  padding-left: 6px;
  padding-right: 1px;
  border-bottom: 1px solid #a0a0a0;
  background: linear-gradient(#fff, #e8ecf5 7px, #d4daee 7px, #e1e6f6 18px, #b4bdd2 18px, #b4bdd2 19px, #f0f0f0 19px);
  color: #6d6d6d;
}

.menubar > .ico { color: #000; }
.menubar > button { padding: 0 7px; }
.menubar > button:first-of-type { padding-left: 6px; }

.mdi-buttons {
  display: flex;
  gap: 1px;
  margin-left: auto;
  color: #8fa0b3;
}

.mdi-buttons button {
  width: 18px;
  height: 18px;
  border: 1px solid #97a9bd;
  background: #dcebfa;
}

/* toolbars */
.toolbar-row {
  display: flex;
  height: 30px;
}

.toolbar-row.last { border-bottom: 1px solid #a0a0a0; }

.toolbar {
  display: flex;
  padding: 3px 7px 3px 0;
  border: solid;
  border-width: 1px 1px 1px 0;
  border-color: #fff #a0a0a0 #a0a0a0;
}

.toolbar-row.last .toolbar { border-bottom: none; }

.toolbar::before {
  content: "";
  width: 6px;
  height: 26px;
  margin: -2px 2px 0 3px;
  background: linear-gradient(90deg, #fff 1px, #f0f0f0 1px, #f0f0f0 2px, #a0a0a0 2px, #a0a0a0 3px, #fff 3px, #fff 4px, #f0f0f0 4px, #f0f0f0 5px, #a0a0a0 5px);
}

.tb {
  display: flex;
  align-items: center;
  width: 23px;
  height: 22px;
  padding-left: 3px;
}

.tb:disabled, .mini:disabled { color: #a0a0a0; }
.tb:disabled .ico { filter: drop-shadow(1px 1px 0 #fff); }
.tb:disabled .w, .tb:disabled .c { fill: #f0f0f0; }

.tb.on, .track {
  background: repeating-conic-gradient(#fff 0 25%, #f0f0f0 0 50%) 0 0 / 2px 2px;
}

.tb.on {
  border: 1px solid;
  border-color: #a0a0a0 #fff #fff #a0a0a0;
}

.sep {
  width: 2px;
  margin: 0 3px;
  border-left: 1px solid #a0a0a0;
  border-right: 1px solid #fff;
}

/* project tree */
.workspace {
  flex: 1;
  display: flex;
}

.project {
  display: flex;
  flex-direction: column;
  width: 307px;
  padding: 1px 11px 0 4px;
  border-bottom: 1px solid #a0a0a0;
  background: linear-gradient(90deg, #f0f0f0 301px, #fff 301px, #fff 303px, #f0f0f0 303px);
}

.dock-head {
  display: flex;
  align-items: center;
  gap: 2px;
  height: 16px;
  padding-bottom: 1px;
}

.dock-grip {
  flex: 1;
  height: 6px;
  border: solid #a0a0a0;
  border-width: 1px 0;
  box-shadow: inset 0 1px #fff, 0 1px #fff;
}

.mini {
  display: flex;
  align-items: center;
  justify-content: center;
  width: 12px;
  height: 12px;
  border: 1px solid;
  border-color: #fff #777 #777 #fff;
}

.mini.dark { background: #c0c0c0; }

.tree-box {
  flex: 1;
  display: flex;
  flex-direction: column;
  border: 1px solid;
  border-color: #808080 #e3e3e3 #e3e3e3 #808080;
  background: #fff;
}

.tree { flex: 1; }
.tree, .tree ul { list-style: none; }
.tree ul { padding-left: 19px; }
.tree li { position: relative; }

.tree li li::before {
  content: "";
  position: absolute;
  left: 8px;
  top: 0;
  height: 100%;
  border-left: 1px dotted #808080;
}

.tree li li:last-child::before { height: 10px; }

.node {
  display: flex;
  align-items: center;
  height: 20px;
  position: relative;
}

.node::before {
  content: "";
  width: 10px;
  margin-left: 9px;
  border-top: 1px dotted #808080;
}

.node .ico { margin-right: 3px; }
.node span { padding: 0 2px; line-height: 20px; }
.node .selected { background: #f0f0f0; }

.twist {
  position: absolute;
  left: 4px;
  top: 6px;
  width: 9px;
  height: 9px;
  border: 1px solid #808080;
  background: linear-gradient(#000, #000) center / 5px 1px no-repeat #fff;
}

.tabs {
  display: flex;
  height: 18px;
  background: #f0f0f0;
}

.tab-edge {
  width: 8px;
  height: 18px;
  fill: none;
  stroke: #000;
}

.tab-fill { fill: #fff; stroke: none; }

.tab {
  height: 17px;
  padding: 0 1px;
  background: #fff;
  border-bottom: 1px solid #a0a0a0;
}

.tab-rest {
  flex: 1;
  border-top: 1px solid #000;
}

/* ladder editor */
.editor {
  flex: 1;
  display: flex;
  flex-direction: column;
}

.pane {
  flex: 1;
  display: grid;
  grid-template-columns: 1fr 17px;
  grid-template-rows: 1fr 17px;
  margin-right: 1px;
  border: 1px solid #696969;
  border-bottom-color: #fff;
}

.ladder {
  display: flex;
  align-items: flex-start;
}

.rung-no {
  width: 49px;
  height: 101px;
  margin-right: 4px;
  padding-left: 2px;
  line-height: 12px;
  border: solid #a0a0a0;
  border-width: 0 1px 1px 0;
}

.rung {
  flex: 1;
  padding-top: 6px;
}

.banner {
  height: 48px;
  padding-left: 4px;
  border-left: 9px solid #208020;
  background: #ff0;
  font-family: "Liberation Mono", "Noto Sans CJK SC", monospace;
}

.banner p {
  height: 24px;
  font-size: 11px;
  line-height: 14px;
}

.cells {
  position: relative;
  height: 51px;
  background:
    linear-gradient(90deg, #d2d2d2 3px, transparent 3px) 0 6px / 102px 1px repeat-x,
    linear-gradient(90deg, transparent 1px, #d2d2d2 1px, #d2d2d2 2px, transparent 2px) 0 5px / 102px 3px repeat-x,
    linear-gradient(90deg, #d2d2d2 3px, transparent 3px) 0 49px / 102px 1px repeat-x,
    linear-gradient(90deg, transparent 1px, #d2d2d2 1px, #d2d2d2 2px, transparent 2px) 0 48px / 102px 3px repeat-x,
    linear-gradient(#e3e3e3, #e3e3e3) 0 48px / 100% 1px no-repeat;
}

/* hatched frame round the selected cell */
.cursor {
  position: absolute;
  left: -2px;
  top: 3px;
  width: 104px;
  height: 49px;
  border: 3px solid transparent;
  background:
    linear-gradient(#f0f0f0, #f0f0f0) padding-box,
    repeating-linear-gradient(135deg, #222 0 1px, #f0f0f0 1px 3px) border-box;
}

.raised {
  background: #f0f0f0;
  border: 1px solid;
  border-color: #e3e3e3 #696969 #696969 #e3e3e3;
  box-shadow: inset 1px 1px #fff, inset -1px -1px #a0a0a0;
}

.vscroll, .hscroll { display: flex; }
.vscroll { flex-direction: column; }

.vscroll .split { height: 7px; }
.hscroll .split { width: 7px; }
.arrow {
  display: flex;
  width: 17px;
  height: 17px;
}
.vscroll .thumb { flex: 11; }
.vscroll .track { flex: 4; }
.hscroll .thumb { flex: 12; }
.hscroll .track { flex: 1; }

.infobar {
  display: flex;
  align-items: flex-start;
  gap: 3px;
  height: 19px;
  padding-top: 2px;
}

.infobar .mini { width: 11px; }
.infobar label { padding: 0 0 0 2px; }

.infobar input {
  height: 17px;
  min-width: 0;
  padding: 0 2px;
  background: none;
  font: inherit;
}

.infobar input, .cell {
  border: 1px solid;
  border-color: #a0a0a0 #fff #fff #a0a0a0;
}

.w-50 { width: 50px; }
.w-70 { width: 70px; }
.infobar .name { flex: 57 1 0; margin-right: 2px; }
.infobar .note { flex: 77 1 0; }

/* status bar */
.status {
  display: flex;
  gap: 2px;
  height: 20px;
  padding-top: 3px;
}

.hint { flex: 1; padding-left: 2px; line-height: 16px; }
.cell { height: 17px; padding-left: 1px; line-height: 15px; white-space: nowrap; }
.right { text-align: right; }
.s20 { width: 20px; }
.s30 { width: 30px; }
.s36 { width: 36px; }
.s56 { width: 56px; }
.s60 { width: 60px; }
.s66 { width: 66px; }
.s106 { width: 106px; }
.s132 { width: 132px; }
.s256 { width: 256px; }

/* floating window */
.form-window {
  position: absolute;
  left: 386px;
  top: 217px;
  width: 816px;
  padding: 0 7px 7px;
  border: 1px solid #000;
  border-radius: 6px 6px 0 0;
  background: linear-gradient(#99b4d1, #b9d1ea 29px, #b9d1ea 50px, #dbe7f5 119px, #b9d1ea 120px);
  box-shadow: inset -1px -1px #33c3e0, inset 1px 1px #e8f2fb;
}

.form-title {
  display: flex;
  align-items: center;
  height: 29px;
  padding: 6px 2px 0 2px;
}

.form-title > .ico { margin-right: 4px; }
.form-title h2 { flex: 1; }

.form-title .caption-buttons button {
  border-color: #5a7494;
  background: linear-gradient(#bfd2e8 50%, #9db9d8 50%, #b4cde8);
}

.form-title .caption-buttons .close {
  border-color: #43161c;
  background: linear-gradient(#e5a498 50%, #c0442d 50%, #d4735c);
  box-shadow: inset 0 0 0 1px #e8b0a8;
}

.form-body {
  height: 450px;
  padding: 27px 41px;
  background: #f0f0f0;
  font-family: "Liberation Mono", "Noto Sans CJK SC", monospace;
}

.form-row {
  display: flex;
  align-items: center;
  gap: 10px;
  margin-bottom: 60px;
}

.form-row.second { margin-bottom: 50px; }

.btn {
  width: 114px;
  height: 60px;
  padding: 2px 2px 0 0;
  border: 1px solid #707070;
  border-radius: 3px;
  background: linear-gradient(#f2f2f2, #ebebeb 50%, #dddddd 50%, #cfcfcf);
  box-shadow: inset 0 0 0 1px #fafafa;
}

.btn.wide { width: 116px; height: 62px; }

.btn.default {
  height: 62px;
  border-color: #3c7fb1;
  box-shadow: inset 0 0 0 1px #30c0ea;
  outline: 1px dotted #000;
  outline-offset: -3px;
}

.result {
  width: 190px;
  height: 35px;
  margin-left: -5px;
  padding-left: 6px;
  background: #000;
  color: #0f0;
  font-size: 35px;
  font-weight: 300;
  line-height: 38px;
  white-space: nowrap;
}

.log {
  display: block;
  width: 496px;
  height: 140px;
  margin-left: 8px;
  padding: 2px;
  border: 1px solid #e2e3ea;
  border-top-color: #abadb3;
  border-radius: 1px;
  background: #fff;
  font-family: "Liberation Mono", monospace;
  font-size: 10px;
  line-height: 14px;
  resize: none;
}
```
